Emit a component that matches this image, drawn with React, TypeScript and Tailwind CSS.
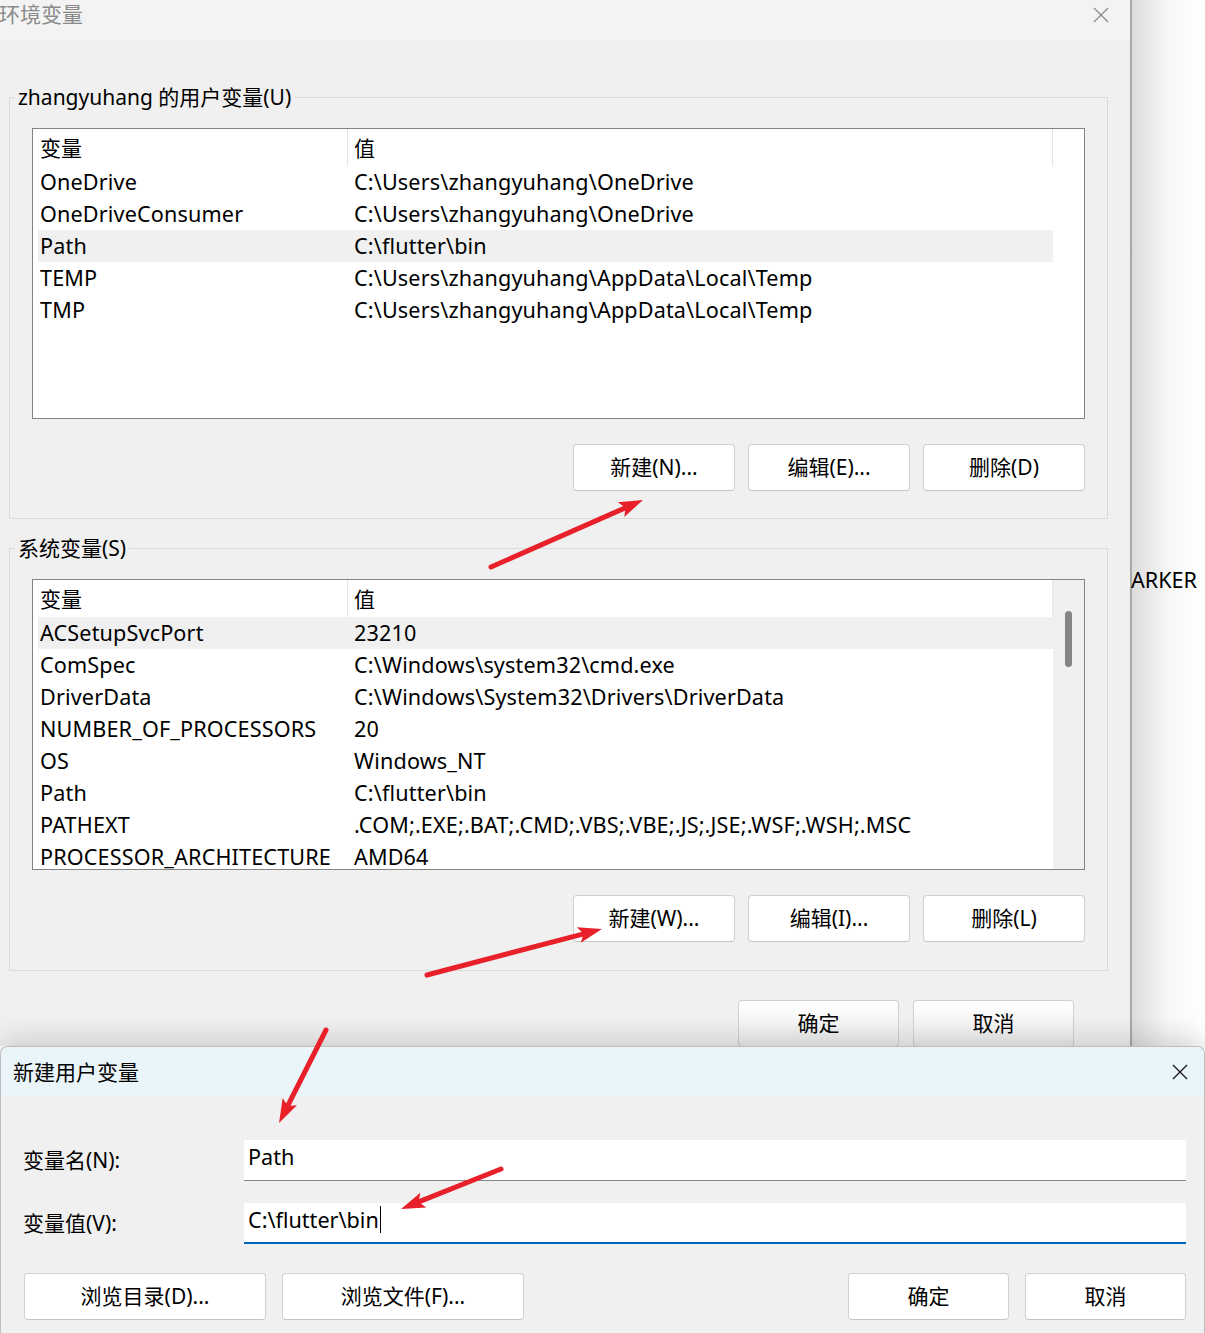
import React from "react";

const userVars: [string, string][] = [
  ["OneDrive", "C:\\Users\\zhangyuhang\\OneDrive"],
  ["OneDriveConsumer", "C:\\Users\\zhangyuhang\\OneDrive"],
  ["Path", "C:\\flutter\\bin"],
  ["TEMP", "C:\\Users\\zhangyuhang\\AppData\\Local\\Temp"],
  ["TMP", "C:\\Users\\zhangyuhang\\AppData\\Local\\Temp"],
];

const sysVars: [string, string][] = [
  ["ACSetupSvcPort", "23210"],
  ["ComSpec", "C:\\Windows\\system32\\cmd.exe"],
  ["DriverData", "C:\\Windows\\System32\\Drivers\\DriverData"],
  ["NUMBER_OF_PROCESSORS", "20"],
  ["OS", "Windows_NT"],
  ["Path", "C:\\flutter\\bin"],
  ["PATHEXT", ".COM;.EXE;.BAT;.CMD;.VBS;.VBE;.JS;.JSE;.WSF;.WSH;.MSC"],
  ["PROCESSOR_ARCHITECTURE", "AMD64"],
];

function WinButton({ label, className = "" }: { label: string; className?: string }) {
  return (
    <button
      className={`h-[47px] shrink-0 rounded-[4px] border border-[#d0d0d0] border-b-[#c4c4c4] bg-white text-[21px] text-black ${className}`}
    >
      {label}
    </button>
  );
}

function VarList({ rows, selected, scroll }: { rows: [string, string][]; selected: number; scroll?: boolean }) {
  return (
    <div className="flex h-[291px] w-[1053px] overflow-hidden border border-[#838383] bg-white">
      <div className="w-[1020px] shrink-0">
        <div className="flex h-[37px] items-center text-[21px]">
          <div className="h-full w-[315px] border-r border-[#e5e5e5] pl-[7px] leading-[38px]">变量</div>
          <div className="h-full w-[705px] border-r border-[#e5e5e5] pl-[6px] leading-[38px]">值</div>
        </div>
        {rows.map(([name, value], i) => (
          <div
            key={name + i}
            className={`ml-[5px] flex h-[32px] w-[1015px] items-center text-[21.6px] tracking-[0.15px] whitespace-nowrap ${
              i === selected ? "bg-[#f0f0f0]" : ""
            }`}
          >
            <div className="w-[309px] pl-[2px]">{name}</div>
            <div className="pl-[7px]">{value}</div>
          </div>
        ))}
      </div>
      {scroll ? (
        <div className="flex w-[31px] shrink-0 justify-center bg-[#f0f0f0]">
          <div className="mt-[31px] h-[56px] w-[7px] rounded-full bg-[#858585]" />
        </div>
      ) : (
        <div className="w-[31px] shrink-0" />
      )}
    </div>
  );
}

function Arrow({ x1, y1, x2, y2 }: { x1: number; y1: number; x2: number; y2: number }) {
  const dx = x2 - x1;
  const dy = y2 - y1;
  const len = Math.hypot(dx, dy);
  const ux = dx / len;
  const uy = dy / len;
  const head = 24;
  const half = 8;
  const bx = x2 - ux * head;
  const by = y2 - uy * head;
  const nx = bx + ux * 5;
  const ny = by + uy * 5;
  const pts = `${x2},${y2} ${bx - uy * half},${by + ux * half} ${nx},${ny} ${bx + uy * half},${by - ux * half}`;
  return (
    <g>
      <line x1={x1} y1={y1} x2={nx} y2={ny} stroke="#e8202a" strokeWidth={5} strokeLinecap="round" />
      <polygon points={pts} fill="#e8202a" />
    </g>
  );
}

function CloseIcon({ color, width }: { color: string; width: number }) {
  return (
    <svg width="16" height="16" viewBox="0 0 16 16">
      <path d="M1 1 L15 15 M15 1 L1 15" stroke={color} strokeWidth={width} fill="none" />
    </svg>
  );
}

export default function App() {
  return (
    <div className="relative h-[1333px] w-[1205px] overflow-hidden bg-white font-['Noto_Sans','Noto_Sans_CJK_SC',sans-serif] text-black">
      <div className="flex h-[1046px]">
        {/* 环境变量 dialog */}
        <div className="flex h-[1046px] w-[1132px] shrink-0 flex-col overflow-hidden border-r-2 border-[#a9a9a9] bg-[#f0f0f0]">
          <div className="flex h-[40px] shrink-0 items-start justify-between bg-[#f3f3f3]">
            <div className="-ml-[1px] h-[28px] text-[21px] leading-[28px] text-[#8a8a8a]">环境变量</div>
            <div className="mr-[21px] mt-[7px]">
              <CloseIcon color="#8c8c8c" width={1.3} />
            </div>
          </div>

          <fieldset className="ml-[9px] mt-[43px] w-[1099px] border border-[#dadada] pb-[27px]">
            <legend className="ml-[5px] h-[28px] px-[3px] text-[21px] leading-[28px]">zhangyuhang 的用户变量(U)</legend>
            <div className="ml-[22px] mt-[17px]">
              <VarList rows={userVars} selected={2} />
            </div>
            <div className="mr-[22px] mt-[25px] flex justify-end gap-[13px]">
              <WinButton label="新建(N)..." className="w-[162px]" />
              <WinButton label="编辑(E)..." className="w-[162px]" />
              <WinButton label="删除(D)" className="w-[162px]" />
            </div>
          </fieldset>

          <fieldset className="ml-[9px] mt-[15px] w-[1099px] border border-[#dadada] pb-[28px]">
            <legend className="ml-[5px] h-[28px] px-[3px] text-[21px] leading-[28px]">系统变量(S)</legend>
            <div className="ml-[22px] mt-[17px]">
              <VarList rows={sysVars} selected={0} scroll />
            </div>
            <div className="mr-[22px] mt-[25px] flex justify-end gap-[13px]">
              <WinButton label="新建(W)..." className="w-[162px]" />
              <WinButton label="编辑(I)..." className="w-[162px]" />
              <WinButton label="删除(L)" className="w-[162px]" />
            </div>
          </fieldset>

          <div className="mt-[29px] flex justify-end gap-[14px] pr-[56px]">
            <WinButton label="确定" className="w-[161px] bg-linear-to-b from-white to-[#ececec]" />
            <WinButton label="取消" className="w-[161px] bg-linear-to-b from-white to-[#ececec]" />
          </div>
        </div>

        {/* background window strip */}
        <div className="flex-1 bg-linear-to-r from-[#dcdcdc] via-[#f7f7f7] to-white">
          <div className="-ml-[1px] mt-[566px] h-[28px] text-[21.6px] leading-[28px]">ARKER</div>
        </div>
      </div>

      {/* 新建用户变量 dialog */}
      <div className="relative h-[287px] rounded-t-[8px] border border-b-0 border-[#bdbdbd] bg-[#f0f0f0] shadow-[0_-6px_28px_rgba(0,0,0,0.16)]">
        <div className="flex h-[50px] items-center justify-between rounded-t-[7px] bg-[#e9f5f9] pl-[12px] pr-[16px]">
          <div className="text-[21px] leading-[28px]">新建用户变量</div>
          <CloseIcon color="#1a1a1a" width={1.4} />
        </div>

        <div className="mt-[43px] flex h-[41px] items-center pr-[18px]">
          <div className="w-[243px] pl-[22px] text-[21px]">变量名(N):</div>
          <div className="h-[41px] flex-1 border-b border-[#868686] bg-white pl-[4px] pt-[3px] text-[21.6px] leading-[28px]">
            Path
          </div>
        </div>

        <div className="mt-[22px] flex h-[41px] items-center pr-[18px]">
          <div className="w-[243px] pl-[22px] text-[21px]">变量值(V):</div>
          <div className="flex h-[41px] flex-1 items-start border-b-2 border-[#0067c0] bg-white pl-[4px] pt-[3px] text-[21.6px] leading-[28px]">
            <span>C:\flutter\bin</span>
            <span className="ml-[1px] h-[27px] w-[1px] bg-black" />
          </div>
        </div>

        <div className="mt-[29px] flex justify-between pl-[23px] pr-[18px]">
          <div className="flex gap-[16px]">
            <WinButton label="浏览目录(D)..." className="w-[242px]" />
            <WinButton label="浏览文件(F)..." className="w-[242px]" />
          </div>
          <div className="flex gap-[16px]">
            <WinButton label="确定" className="w-[161px]" />
            <WinButton label="取消" className="w-[161px]" />
          </div>
        </div>
      </div>

      <svg className="pointer-events-none absolute inset-0 z-10" width="1205" height="1333" viewBox="0 0 1205 1333">
        <Arrow x1={491} y1={567} x2={643} y2={500} />
        <Arrow x1={427} y1={975} x2={602} y2={929} />
        <Arrow x1={326} y1={1030} x2={279} y2={1123} />
        <Arrow x1={501} y1={1169} x2={401} y2={1209} />
      </svg>
    </div>
  );
}
